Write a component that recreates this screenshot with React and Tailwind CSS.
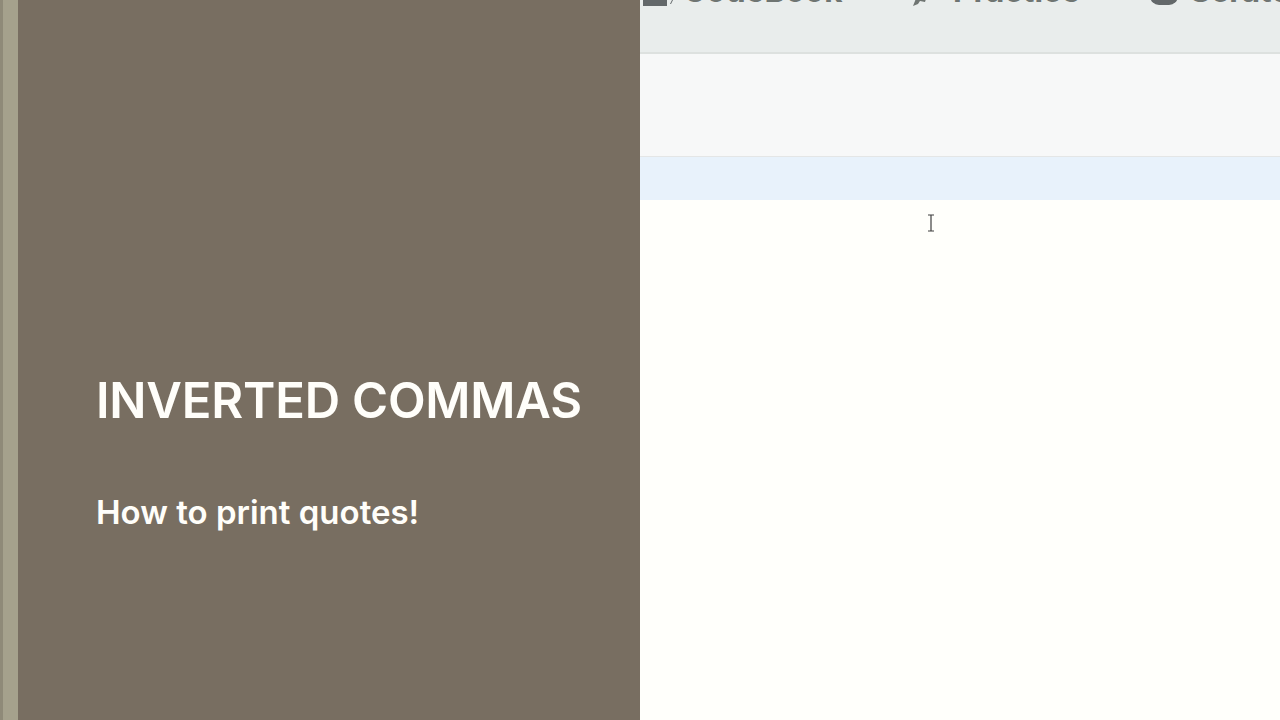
function NavItem({ icon, label, className }) {
  return (
    <div className={`flex items-end shrink-0 ${className}`}>
      {icon}
      <span className="text-[31.6px] leading-[36px] font-bold text-[#6f7572] whitespace-nowrap">{label}</span>
    </div>
  );
}

export default function App() {
  return (
    <div className="flex w-[1280px] h-[720px] overflow-hidden font-['Inter','Liberation_Sans',sans-serif]">
      {/* Slide panel */}
      <div className="flex w-[640px] shrink-0 bg-[#786e61]">
        <div className="w-[3px] bg-[#8f8a78]" />
        <div className="w-[15px] bg-[#a5a18c]" />
        <div className="flex-1 pl-[78px] pt-[371px]">
          <h1 className="text-[49px] leading-[60px] font-semibold text-[#fffefa] tracking-[-0.2px] whitespace-nowrap">INVERTED COMMAS</h1>
          <p className="mt-[61px] text-[33px] leading-[40px] font-semibold text-[#fffefa] whitespace-nowrap">How to print quotes!</p>
        </div>
      </div>

      {/* Editor screen */}
      <div className="flex flex-col flex-1 min-w-0 bg-[#fffffb]">
        <div className="h-[54px] shrink-0 overflow-hidden bg-[#e9edec] border-b-2 border-[#dde1df]">
          <div className="flex -mt-[27px]">
            <NavItem
              className="ml-[3px] w-[267px]"
              icon={
                <svg className="mr-[10px] mb-[3px]" width="30" height="30" viewBox="0 0 30 30" fill="#63686a">
                  <path d="M0 0H24V30H0Z" />
                  <path d="M29 24L30 24L28 28L27 28Z" />
                </svg>
              }
              label="CodeBook"
            />
            <NavItem
              className="w-[240px]"
              icon={
                <svg className="mr-[25px] mb-[3px]" width="18" height="30" viewBox="0 0 18 30" fill="#6f7572">
                  <path d="M3 30L7 20H17L15 26L10 25L8 28Z" />
                </svg>
              }
              label="Practice"
            />
            <NavItem
              icon={<div className="w-[28px] h-[28px] mr-[12px] mb-[4px] rounded-[9px] bg-[#63686a]" />}
              label="Scratch"
            />
          </div>
        </div>
        <div className="h-[103px] shrink-0 bg-[#f7f8f8] border-b border-[#e4e6e6]" />
        <div className="h-[43px] shrink-0 bg-[#e8f2fb]" />
        <div className="flex-1 pl-[286px] pt-[14px]">
          <svg width="10" height="18" viewBox="0 0 10 18" fill="none" stroke="#3f3f3f" strokeWidth="1.2">
            <path d="M2 1h6M5 1v16M2 17h6" />
          </svg>
        </div>
      </div>
    </div>
  );
}
